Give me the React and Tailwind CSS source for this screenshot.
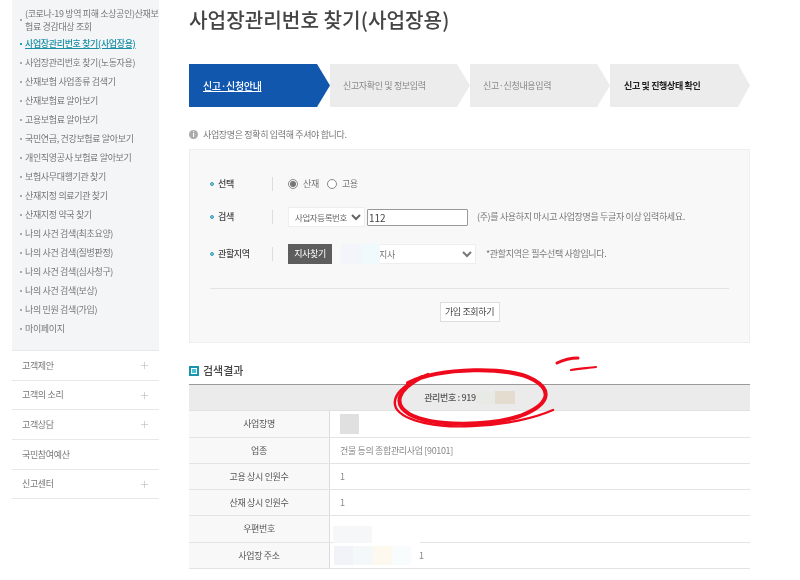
import React from "react";
import { Plus } from "lucide-react";

const FONT = "font-['Noto_Sans_CJK_KR','Noto_Sans','Liberation_Sans',sans-serif]";

const menu = [
  "사업장관리번호 찾기(노동자용)",
  "산재보험 사업종류 검색기",
  "산재보험료 알아보기",
  "고용보험료 알아보기",
  "국민연금, 건강보험료 알아보기",
  "개인직영공사 보험료 알아보기",
  "보험사무대행기관 찾기",
  "산재지정 의료기관 찾기",
  "산재지정 약국 찾기",
  "나의 사건 검색(최초요양)",
  "나의 사건 검색(질병판정)",
  "나의 사건 검색(심사청구)",
  "나의 사건 검색(보상)",
  "나의 민원 검색(가입)",
  "마이페이지",
];

const sections = [
  ["고객제안", true],
  ["고객의 소리", true],
  ["고객상담", true],
  ["국민참여예산", false],
  ["신고센터", true],
];

function Sidebar() {
  return (
    <aside className="w-[147px] ml-3 shrink-0">
      <div className="bg-[#f4f5f7] h-[351px] pt-[6px] border-b border-[#e8e8e8] text-[#777]">
        <div className="flex pl-2 items-center h-[28px] leading-[13px]">
          <span className="w-[2px] h-[2px] bg-[#aaa] mr-[3px] shrink-0" />
          <span className="whitespace-nowrap">
            (코로나-19 방역 피해 소상공인)산재보
            <br />
            험료 경감대상 조회
          </span>
        </div>
        <div className="flex pl-2 items-center h-[19px] text-[#1a8fa5] font-medium">
          <span className="w-[2px] h-[2px] bg-[#1aa5c0] mr-[3px] shrink-0" />
          <span className="underline whitespace-nowrap">사업장관리번호 찾기(사업장용)</span>
        </div>
        {menu.map((m) => (
          <div key={m} className="flex pl-2 items-center h-[19px]">
            <span className="w-[2px] h-[2px] bg-[#aaa] mr-[3px] shrink-0" />
            <span className="whitespace-nowrap">{m}</span>
          </div>
        ))}
      </div>
      {sections.map(([label, plus]) => (
        <div
          key={label}
          className="flex items-center justify-between h-[29.7px] pl-[10px] pr-[9px] border-b border-[#e8e8e8] text-[#777]"
        >
          <span>{label}</span>
          {plus && <Plus size={11} strokeWidth={1.25} className="text-[#b5b5b5]" />}
        </div>
      ))}
    </aside>
  );
}

function Step({ active, bold, children, className }) {
  return (
    <div
      className={`h-[43px] flex items-center shrink-0 ${className} ${
        active
          ? "bg-[#1257ae] text-white underline font-medium text-[10px]"
          : bold
          ? "bg-[#ececec] text-[#222] font-bold"
          : "bg-[#ececec] text-[#888]"
      }`}
    >
      {children}
    </div>
  );
}

function Label({ children }) {
  return (
    <div className="flex items-center w-[63px] shrink-0">
      <span className="w-[4px] h-[4px] rounded-full bg-[#7cc4d8] border border-[#3a9fb8] mr-[4px] shrink-0" />
      <span className="w-[54px] text-[#444] font-medium whitespace-nowrap">{children}</span>
      <span className="w-px h-[14px] bg-[#ddd] shrink-0" />
    </div>
  );
}

function Row({ label, children, h = "h-[26px]" }) {
  return (
    <div className={`flex ${h} border-b border-[#e3e3e3]`}>
      <div className="w-[141px] bg-[#f8f8f8] border-r border-[#dcdcdc] text-[#555] flex items-center justify-center shrink-0">
        {label}
      </div>
      <div className="flex-1 flex items-center pl-[10px] text-[#888]">{children}</div>
    </div>
  );
}

function RedMark() {
  return (
    <svg className="absolute left-0 top-0 pointer-events-none" width="800" height="580" viewBox="0 0 800 580" fill="none" strokeLinecap="round">
      <path
        d="M 408 383 C 440 367 510 366 534 380 C 553 391 549 405 520 416 C 490 426 432 427 409 414 C 393 404 397 390 422 377"
        stroke="#ee0a1c"
        strokeWidth="4"
      />
      <path
        d="M 428 374 C 402 384 391 397 396 408 C 404 422 440 428 472 426 C 505 425 535 418 553 410"
        stroke="#ee0a1c"
        strokeWidth="2.4"
      />
      <path d="M 557 363 C 563 360 571 358 578 358" stroke="#ee0a1c" strokeWidth="3" />
      <path d="M 571 370 C 578 369 588 368 596 367" stroke="#ee0a1c" strokeWidth="2.2" />
    </svg>
  );
}

export default function App() {
  return (
    <div className={`relative flex w-[800px] h-[580px] overflow-hidden bg-white text-[9px] tracking-[-0.35px] blur-[0.3px] ${FONT}`}>
      <Sidebar />
      <main className="ml-[30px] w-[561px] shrink-0">
        <h1 className="h-[40px] mb-[24px] flex items-center text-[20.2px] tracking-normal font-medium text-[#444] whitespace-nowrap">
          사업장관리번호 찾기(사업장용)
        </h1>

        <div className="flex">
          <Step active className="w-[141px] pl-[14px] [clip-path:polygon(0_0,128px_0,141px_50%,128px_100%,0_100%)]">
            신고·신청안내
          </Step>
          <Step className="w-[140px] pl-[13px] [clip-path:polygon(0_0,127px_0,140px_50%,127px_100%,0_100%)]">
            신고자확인 및 정보입력
          </Step>
          <Step className="w-[140px] pl-[13px] [clip-path:polygon(0_0,127px_0,140px_50%,127px_100%,0_100%)]">
            신고·신청내용입력
          </Step>
          <Step bold className="w-[140px] pl-[14px] [clip-path:polygon(0_0,128px_0,140px_50%,128px_100%,0_100%)]">
            신고 및 진행상태 확인
          </Step>
        </div>

        <div className="h-[42px] pt-[13px] flex items-center text-[#777]">
          <span className="w-[9px] h-[9px] rounded-full bg-[#aaa] text-white text-[7px] font-bold flex items-center justify-center mr-[5px]">
            i
          </span>
          사업장명은 정확히 입력해 주셔야 합니다.
        </div>

        <section className="h-[194px] bg-[#f8f8f8] border border-[#eeeeee] px-[20px] pt-[23px]">
          <div className="flex items-center h-[22px]">
            <Label>선택</Label>
            <div className="ml-[15px] flex items-center text-[#777]">
              <span className="w-[10px] h-[10px] rounded-full border border-[#888] flex items-center justify-center mr-[5px]">
                <span className="w-[6px] h-[6px] rounded-full bg-[#777]" />
              </span>
              <span className="mr-[8px]">산재</span>
              <span className="w-[10px] h-[10px] rounded-full border border-[#888] bg-white mr-[5px]" />
              <span>고용</span>
            </div>
          </div>

          <div className="flex items-center h-[22px] mt-[11px]">
            <Label>검색</Label>
            <select className="ml-[15px] w-[77px] h-[20px] shrink-0 bg-white border border-[#eeeeee] text-[8.5px] tracking-[-0.4px] text-[#666] pl-[2px]">
              <option>사업자등록번호</option>
            </select>
            <div className="ml-[2px] w-[101px] h-[17px] shrink-0 bg-white border border-[#999] rounded-[1px] pl-[1px] text-[10px] tracking-normal leading-[15px] text-[#444] overflow-hidden">
              112
            </div>
            <span className="ml-[9px] text-[#777] whitespace-nowrap">(주)를 사용하지 마시고 사업장명을 두글자 이상 입력하세요.</span>
          </div>

          <div className="flex items-center h-[22px] mt-[15px]">
            <Label>관할지역</Label>
            <button className="ml-[15px] w-[44px] h-[20px] shrink-0 bg-[#5d5d5d] text-white">지사찾기</button>
            <div className="relative ml-[9px] w-[135px] h-[20px] shrink-0">
              <select className="w-full h-full bg-white border border-[#eeeeee] text-[#777] pl-[33px]">
                <option>지사</option>
              </select>
              <span className="absolute left-0 top-0 w-[20px] h-[20px] bg-[#f3f5fa]" />
              <span className="absolute left-[20px] top-0 w-[19px] h-[20px] bg-[#f0fafc]" />
            </div>
            <span className="ml-[10px] text-[#777] whitespace-nowrap">*관할지역은 필수선택 사항입니다.</span>
          </div>

          <div className="h-px bg-[#e3e3e3] mt-[23px]" />
          <div className="flex justify-center mt-[13px]">
            <button className="w-[60px] h-[20px] bg-white border border-[#ddd] text-[#444] whitespace-nowrap">
              가입 조회하기
            </button>
          </div>
        </section>

        <h2 className="h-[41px] pt-[14px] flex items-center text-[11px] tracking-normal font-medium text-[#444]">
          <span className="w-[10px] h-[10px] bg-[#1a93ad] flex items-center justify-center mr-[4px]">
            <span className="w-[6px] h-[6px] bg-white flex items-center justify-center">
              <span className="w-[4px] h-[4px] bg-[#48c0d8]" />
            </span>
          </span>
          검색결과
        </h2>

        <div className="border-t border-[#9a9a9a]">
          <div className="h-[26px] bg-[#ebebeb] border-b border-[#e0e0e0] flex items-center justify-center font-medium text-[#555]">
            <span className="whitespace-nowrap">관리번호 : 919</span>
            <span className="w-[19px] h-[13px] bg-[#e8eae5]" />
            <span className="w-[20px] h-[13px] bg-[#e5dcd0]" />
          </div>
          <Row label="사업장명" h="h-[27px]">
            <span className="w-[19px] h-[20px] bg-[#e0e0e0]" />
          </Row>
          <Row label="업종">건물 등의 종합관리사업 [90101]</Row>
          <Row label="고용 상시 인원수">1</Row>
          <Row label="산재 상시 인원수">1</Row>
          <Row label="우편번호" h="h-[27px]" />
          <Row label="사업장 주소">
            <span className="w-[19px] h-[19px] bg-[#f2f3f8] -ml-[6px]" />
            <span className="w-[20px] h-[19px] bg-[#f5f8f8]" />
            <span className="w-[19px] h-[19px] bg-[#fdf9ef]" />
            <span className="w-[19px] h-[19px] bg-[#f8fcfc]" />
            <span className="ml-[8px]">1</span>
          </Row>
        </div>
      </main>

      <span className="absolute left-[385px] top-[210px] w-[47px] h-[15px] bg-white" />
      <span className="absolute left-[333px] top-[526px] w-[39px] h-[17px] bg-[#f6f7f8]" />
      <span className="absolute left-[372px] top-[541px] w-[48px] h-[3px] bg-white" />
      <RedMark />
    </div>
  );
}
